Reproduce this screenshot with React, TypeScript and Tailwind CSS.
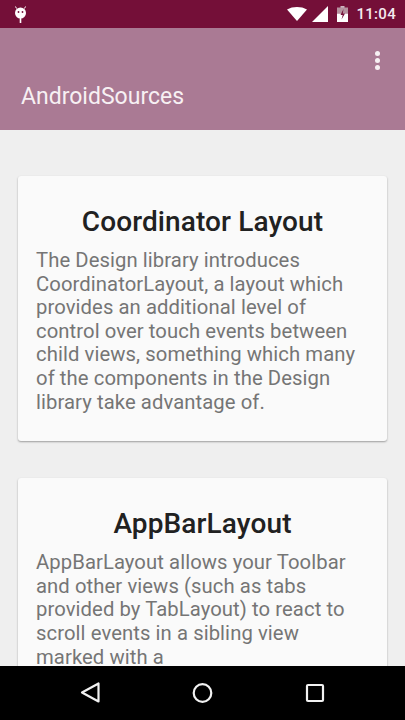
import React from "react";

const cards = [
  {
    title: "Coordinator Layout",
    lines: [
      "The Design library introduces",
      "CoordinatorLayout, a layout which",
      "provides an additional level of",
      "control over touch events between",
      "child views, something which many",
      "of the components in the Design",
      "library take advantage of.",
    ],
  },
  {
    title: "AppBarLayout",
    lines: [
      "AppBarLayout allows your Toolbar",
      "and other views (such as tabs",
      "provided by TabLayout) to react to",
      "scroll events in a sibling view",
      "marked with a",
    ],
  },
];

function Card({ title, lines }: { title: string; lines: string[] }) {
  return (
    <div className="shrink-0 bg-[#fafafa] rounded-[3px] shadow-[0_1px_2px_rgba(0,0,0,0.35)] px-[18px] pt-[28px] pb-[27px]">
      <h2 className="text-center text-[28px] tracking-[0.12px] leading-[36px] font-medium text-[#212121]">{title}</h2>
      <p className="text-[20.25px] tracking-[0.08px] leading-[23.6px] text-[#757575] mt-[9px] whitespace-nowrap">
        {lines.map((l) => (
          <span key={l} className="block">{l}</span>
        ))}
      </p>
    </div>
  );
}

export default function App() {
  return (
    <div className="w-[405px] h-[720px] flex flex-col overflow-hidden bg-[#efefef] font-['Roboto',sans-serif]">
      <div className="h-[28px] shrink-0 bg-[#740f38] flex items-center justify-between pl-[14px] pr-[9px] text-white">
        <svg width="13" height="18" viewBox="0 0 13 18" fill="#fff">
          <circle cx="6.5" cy="8" r="5.5" />
          <path d="M2.5 3.5 1.5 1.5M10.5 3.5l1-2" stroke="#fff" strokeWidth="1" />
          <rect x="5.7" y="13" width="1.6" height="5" />
          <circle cx="4.5" cy="7" r="0.9" fill="#740f38" />
          <circle cx="8.5" cy="7" r="0.9" fill="#740f38" />
        </svg>
        <div className="flex items-center">
          <svg width="20" height="14" viewBox="0 0 20 14" fill="#fff">
            <path d="M0 2.5C3 .8 6.3 0 10 0s7 .8 10 2.5L10 14z" />
          </svg>
          <svg width="16" height="16" viewBox="0 0 16 16" fill="#fff" className="ml-[5px]">
            <path d="M0 16 16 0v16z" />
          </svg>
          <svg width="11" height="16" viewBox="0 0 11 16" className="ml-[9px]">
            <rect x="3.5" y="0" width="4" height="2" fill="#cdb5c0" />
            <rect x="0" y="1.5" width="11" height="6" fill="#b5929f" />
            <rect x="0" y="7.5" width="11" height="8.5" fill="#fff" />
            <path d="M6.5 3 3.5 9h2.2L4.5 13.5 8 7.5H5.8z" fill="#740f38" />
          </svg>
          <span className="ml-[8px] text-[15px] tracking-[0.3px] leading-none font-medium text-[#f4eaef]">11:04</span>
        </div>
      </div>

      <div className="h-[102px] shrink-0 bg-[#aa7a94] relative flex items-end pl-[21px] pb-[19px]">
        <span className="text-[23px] leading-[28px] text-[#f7f0f3]">AndroidSources</span>
        <div className="absolute right-[25px] top-[23px] flex flex-col gap-[2px]">
          <span className="w-[5px] h-[5px] rounded-full bg-[#f7f0f3]" />
          <span className="w-[5px] h-[5px] rounded-full bg-[#f7f0f3]" />
          <span className="w-[5px] h-[5px] rounded-full bg-[#f7f0f3]" />
        </div>
      </div>

      <div className="flex-1 min-h-0 overflow-hidden flex flex-col gap-[37px] px-[18px] pt-[46px]">
        {cards.map((c) => (
          <Card key={c.title} title={c.title} lines={c.lines} />
        ))}
      </div>

      <div className="h-[54px] shrink-0 bg-black flex items-center">
        <svg width="405" height="54" viewBox="0 0 405 54" fill="none" stroke="#f2f2f2" strokeWidth="2.2">
          <path d="M98.5 17.5v18L82 26.5z" strokeLinejoin="round" />
          <circle cx="202.5" cy="27" r="8.8" />
          <rect x="307" y="19" width="16" height="16" rx="1" />
        </svg>
      </div>
    </div>
  );
}
